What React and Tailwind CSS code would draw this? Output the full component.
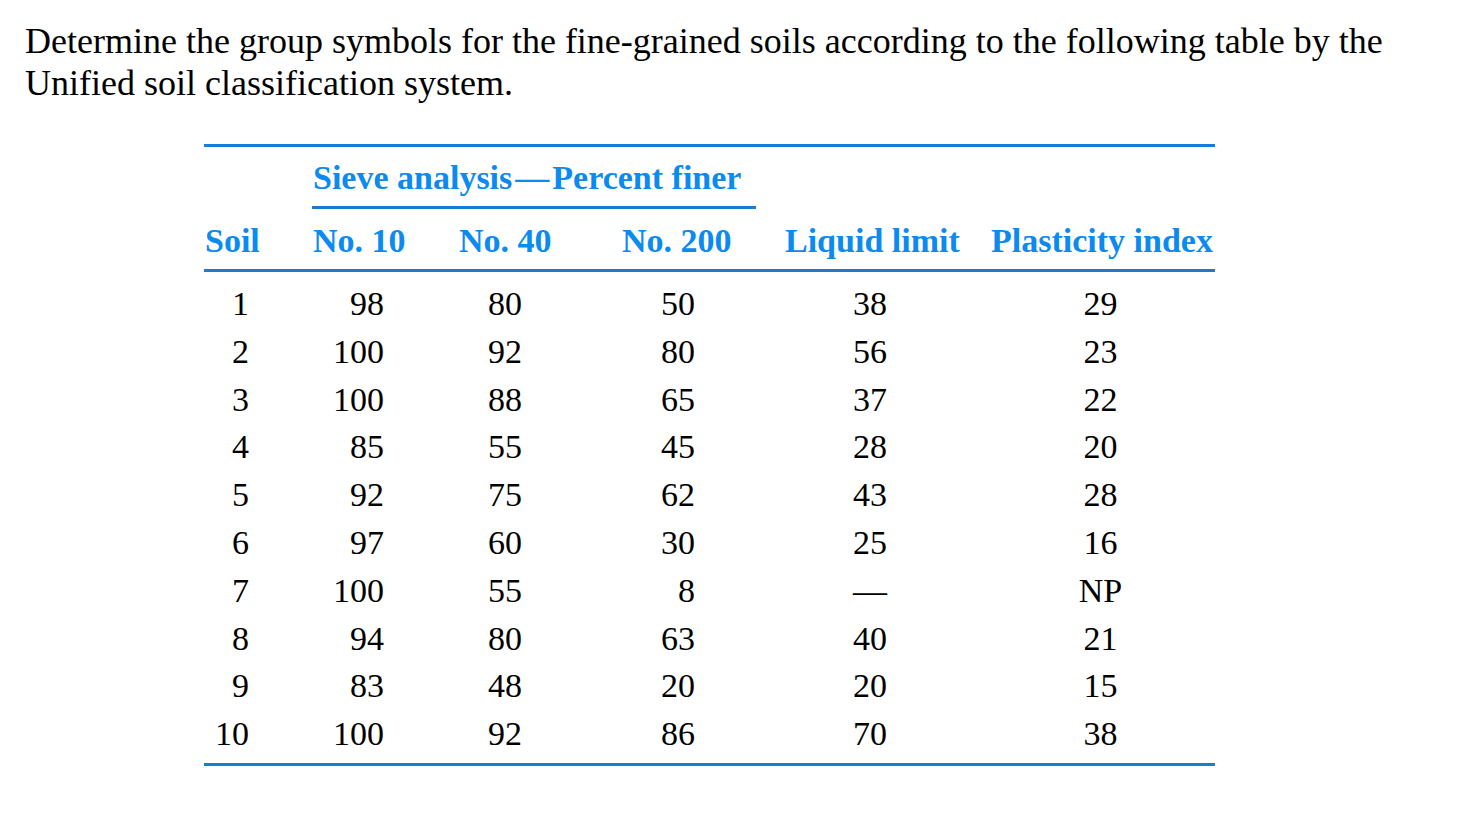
import React from "react";

const rows = [
  ["1", "98", "80", "50", "38", "29"],
  ["2", "100", "92", "80", "56", "23"],
  ["3", "100", "88", "65", "37", "22"],
  ["4", "85", "55", "45", "28", "20"],
  ["5", "92", "75", "62", "43", "28"],
  ["6", "97", "60", "30", "25", "16"],
  ["7", "100", "55", "8", "—", "NP"],
  ["8", "94", "80", "63", "40", "21"],
  ["9", "83", "48", "20", "20", "15"],
  ["10", "100", "92", "86", "70", "38"],
];

// cell classes for body columns (right-aligned / centered like the printed table)
const cellCls = [
  "text-right pr-[59px]",
  "text-right pr-[70px]",
  "pl-[34px]",
  "text-right pr-[85px]",
  "text-center pr-[26px]",
  "text-center",
];

const heads = ["Soil", "No. 10", "No. 40", "No. 200", "Liquid limit", "Plasticity index"];

function App() {
  return (
    <div className="min-h-[814px] bg-white text-black font-['Liberation_Serif','Times_New_Roman',serif]">
      <p className="pl-[25px] pt-[20px] text-[36px] leading-[42px]">
        Determine the group symbols for the fine-grained soils according to the following table by the
        <br />
        Unified soil classification system.
      </p>

      <div className="ml-[204px] mt-[40px] w-[1011px]">
        <div className="border-t-[3px] border-[#1a7ad8]" />
        <div className="grid grid-cols-[104px_146px_163px_163px_206px_229px] text-[34px]">
          {/* group header */}
          <div />
          <div className="col-span-3 pt-[11px]">
            <div className="ml-[4px] w-[444px] border-b-[3px] border-[#1a7ad8] pb-[8px] pl-[1px] font-bold text-[#0b8aef] leading-[40px] whitespace-nowrap">
              Sieve analysis<span className="mx-[3px]">—</span>Percent finer
            </div>
          </div>
          <div />
          <div />

          {/* column headers */}
          {heads.map((h, i) => (
            <div
              key={h}
              className={
                "border-b-[3px] border-[#1a7ad8] pt-[12px] pb-[8px] font-bold text-[#0b8aef] leading-[40px] whitespace-nowrap " +
                (i === 0 ? "pl-[1px]" : "pl-[5px]")
              }
            >
              {h}
            </div>
          ))}

          {/* body */}
          {rows.map((r, ri) =>
            r.map((v, ci) => (
              <div
                key={ri + "-" + ci}
                className={
                  "h-[47.8px] leading-[47.8px] " +
                  cellCls[ci] +
                  (ri === 0 ? " mt-[8px]" : "")
                }
              >
                {v}
              </div>
            ))
          )}
        </div>
        <div className="mt-[5px] border-t-[3px] border-[#1a7ad8]" />
      </div>
    </div>
  );
}

export default App;
